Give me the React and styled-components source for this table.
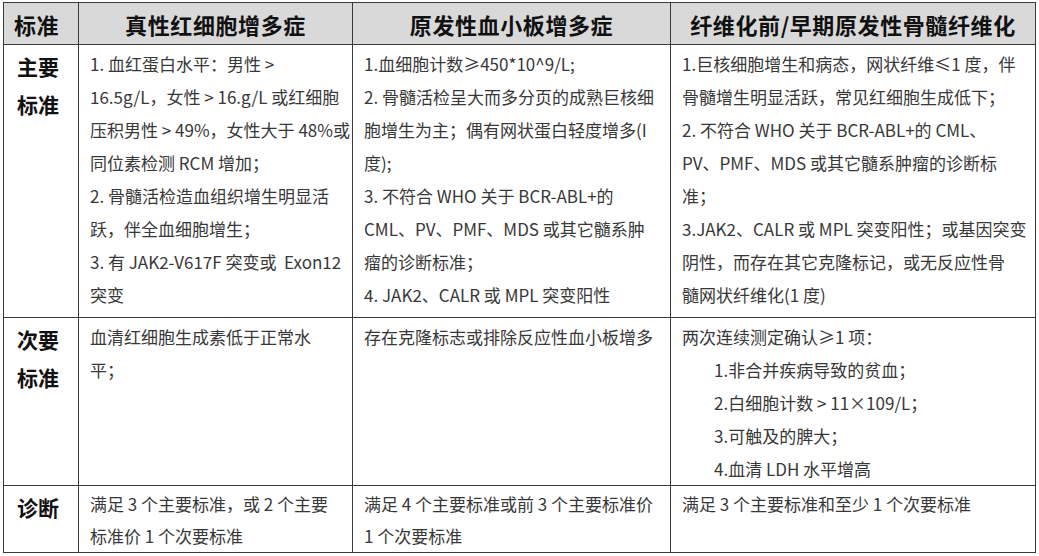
import React from "react";
import styled, { createGlobalStyle } from "styled-components";

const GlobalStyle = createGlobalStyle`
  html, body {
    margin: 0;
    padding: 0;
    background: #fff;
  }
  body {
    font-family: "Noto Sans CJK SC", "Noto Sans", sans-serif;
  }
`;

const Page = styled.div`
  padding: 2px 3px;
`;

const Table = styled.table`
  width: 1032px;
  table-layout: fixed;
  border-collapse: collapse;
  border: 1px solid #3a3a3a;
`;

const HeadRow = styled.tr`
  height: 42px;
  background: #d9d9d9;
`;

const HeadCell = styled.th`
  border: 1px solid #3a3a3a;
  font-size: 22px;
  font-weight: 700;
  color: #111;
  text-align: ${(p) => (p.$left ? "left" : "center")};
  padding: ${(p) => (p.$left ? "0 0 0 10px" : "0")};
  letter-spacing: 0.6px;
  white-space: nowrap;
`;

const BodyRow = styled.tr`
  height: ${(p) => p.$h}px;
`;

const LabelCell = styled.td`
  border: 1px solid #3a3a3a;
  vertical-align: top;
  padding: 2px 0 0 13px;
  font-size: 21px;
  font-weight: 700;
  line-height: 38px;
  color: #111;
`;

const Cell = styled.td`
  border: 1px solid #3a3a3a;
  vertical-align: top;
  padding: 2px 4px 0 11px;
  font-size: 17px;
  line-height: ${(p) => p.$lh}px;
  letter-spacing: 0;
  color: #383838;
`;

const Line = styled.div`
  white-space: pre;
  padding-left: ${(p) => (p.$indent ? "32px" : "0")};
`;

const Lines = ({ items }) =>
  items.map((t, i) =>
    typeof t === "string" ? (
      <Line key={i}>{t}</Line>
    ) : (
      <Line key={i} $indent>
        {t.text}
      </Line>
    )
  );

const rows = [
  {
    label: ["主要", "标准"],
    height: 273,
    lh: 33,
    cells: [
      [
        "1. 血红蛋白水平：男性 >",
        "16.5g/L，女性 > 16.g/L 或红细胞",
        "压积男性 > 49%，女性大于 48%或",
        "同位素检测 RCM 增加；",
        "2. 骨髓活检造血组织增生明显活",
        "跃，伴全血细胞增生；",
        "3. 有 JAK2-V617F 突变或  Exon12",
        "突变",
      ],
      [
        "1.血细胞计数≥450*10^9/L;",
        "2. 骨髓活检呈大而多分页的成熟巨核细",
        "胞增生为主；偶有网状蛋白轻度增多(I",
        "度);",
        "3. 不符合 WHO 关于 BCR-ABL+的",
        "CML、PV、PMF、MDS 或其它髓系肿",
        "瘤的诊断标准；",
        "4. JAK2、CALR 或 MPL 突变阳性",
      ],
      [
        "1.巨核细胞增生和病态，网状纤维≤1 度，伴",
        "骨髓增生明显活跃，常见红细胞生成低下；",
        "2. 不符合 WHO 关于 BCR-ABL+的 CML、",
        "PV、PMF、MDS 或其它髓系肿瘤的诊断标",
        "准；",
        "3.JAK2、CALR 或 MPL 突变阳性；或基因突变",
        "阴性，而存在其它克隆标记，或无反应性骨",
        "髓网状纤维化(1 度)",
      ],
    ],
  },
  {
    label: ["次要", "标准"],
    height: 168,
    lh: 33,
    cells: [
      ["血清红细胞生成素低于正常水", "平；"],
      ["存在克隆标志或排除反应性血小板增多"],
      [
        "两次连续测定确认≥1 项：",
        { text: "1.非合并疾病导致的贫血；" },
        { text: "2.白细胞计数 > 11×109/L；" },
        { text: "3.可触及的脾大；" },
        { text: "4.血清 LDH 水平增高" },
      ],
    ],
  },
  {
    label: ["诊断"],
    height: 65,
    lh: 32,
    cells: [
      ["满足 3 个主要标准，或 2 个主要", "标准价 1 个次要标准"],
      ["满足 4 个主要标准或前 3 个主要标准价", "1 个次要标准"],
      ["满足 3 个主要标准和至少 1 个次要标准"],
    ],
  },
];

export default function App() {
  return (
    <Page>
      <GlobalStyle />
      <Table>
        <colgroup>
          <col style={{ width: 75 }} />
          <col style={{ width: 274 }} />
          <col style={{ width: 318 }} />
          <col style={{ width: 365 }} />
        </colgroup>
        <thead>
          <HeadRow>
            <HeadCell $left>标准</HeadCell>
            <HeadCell>真性红细胞增多症</HeadCell>
            <HeadCell>原发性血小板增多症</HeadCell>
            <HeadCell>纤维化前/早期原发性骨髓纤维化</HeadCell>
          </HeadRow>
        </thead>
        <tbody>
          {rows.map((r, i) => (
            <BodyRow key={i} $h={r.height}>
              <LabelCell>
                {r.label.map((l) => (
                  <div key={l}>{l}</div>
                ))}
              </LabelCell>
              {r.cells.map((c, j) => (
                <Cell key={j} $lh={r.lh}>
                  <Lines items={c} />
                </Cell>
              ))}
            </BodyRow>
          ))}
        </tbody>
      </Table>
    </Page>
  );
}
